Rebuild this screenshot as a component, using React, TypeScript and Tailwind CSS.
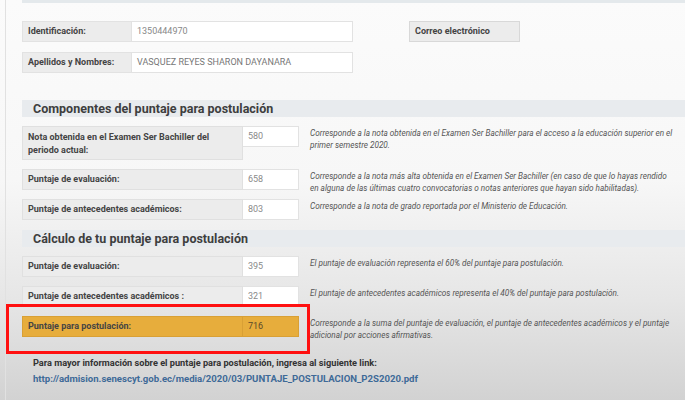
import React from 'react';

const font = { fontFamily: 'Roboto, "Liberation Sans", sans-serif' };

type Row = { label: string; value: string; desc: string; tall?: boolean; highlight?: boolean };

const componentes: Row[] = [
  {
    label: 'Nota obtenida en el Examen Ser Bachiller del periodo actual:',
    value: '580',
    desc: 'Corresponde a la nota obtenida en el Examen Ser Bachiller para el acceso a la educación superior en el primer semestre 2020.',
    tall: true,
  },
  {
    label: 'Puntaje de evaluación:',
    value: '658',
    desc: 'Corresponde a la nota más alta obtenida en el Examen Ser Bachiller (en caso de que lo hayas rendido en alguna de las últimas cuatro convocatorias o notas anteriores que hayan sido habilitadas).',
  },
  {
    label: 'Puntaje de antecedentes académicos:',
    value: '803',
    desc: 'Corresponde a la nota de grado reportada por el Ministerio de Educación.',
  },
];

const calculo: Row[] = [
  {
    label: 'Puntaje de evaluación:',
    value: '395',
    desc: 'El puntaje de evaluación representa el 60% del puntaje para postulación.',
  },
  {
    label: 'Puntaje de antecedentes académicos :',
    value: '321',
    desc: 'El puntaje de antecedentes académicos representa el 40% del puntaje para postulación.',
  },
  {
    label: 'Puntaje para postulación:',
    value: '716',
    desc: 'Corresponde a la suma del puntaje de evaluación, el puntaje de antecedentes académicos y el puntaje adicional por acciones afirmativas.',
    highlight: true,
  },
];

function ScoreRow({ row }: { row: Row }) {
  const labelBg = row.highlight ? 'bg-[#e7ad3c] border-[#d9a035]' : 'bg-[#ececec] border-[#e0e0e0]';
  const valueBg = row.highlight ? 'bg-[#e7ad3c] border-[#d9a035] text-[#5a4a2a]' : 'bg-white border-[#e2e2e2] text-[#8a8a8a]';
  return (
    <div className={`flex items-start ${row.tall ? 'h-[34px]' : 'h-[21px]'}`}>
      <div
        className={`w-[221px] shrink-0 border px-[5px] text-[9px] font-bold text-[#444] ${labelBg} ${
          row.tall ? 'h-[34px] pt-[4px] leading-[13px]' : 'h-[21px] leading-[19px]'
        }`}
      >
        {row.label}
      </div>
      <div className={`w-[56px] h-[21px] shrink-0 border border-l-0 px-[5px] text-[9px] leading-[19px] ${valueBg}`}>
        {row.value}
      </div>
      <p className="ml-[11px] pt-[1px] text-[8.2px] italic leading-[12px] text-[#555] pr-[9px]">{row.desc}</p>
    </div>
  );
}

function SectionTitle({ children }: { children: React.ReactNode }) {
  return (
    <div className="h-[17px] bg-[#e8ebee] pl-[11px] text-[12.5px] font-bold leading-[17px] text-[#3e3e3e]">
      {children}
    </div>
  );
}

export default function App() {
  return (
    <div
      className="relative w-[685px] h-[400px] overflow-hidden bg-[linear-gradient(to_bottom,#fbfbfb_0%,#f7f7f7_45%,#e6e6e6_75%,#d2d2d2_100%)]"
      style={font}
    >
      <div className="ml-[5px] h-full border-l border-[#e1e1e1] pl-[16px]">
        <div className="h-[3px] bg-[#e4e9ec]" />

        <div className="mt-[18px] flex items-start">
          <div className="flex flex-col gap-[10px]">
            <div className="flex">
              <div className="w-[110px] h-[21px] border border-[#e2e2e2] bg-[#ececec] px-[5px] text-[9px] font-bold leading-[19px] text-[#444]">
                Identificación:
              </div>
              <div className="w-[221px] h-[21px] border border-l-0 border-[#e2e2e2] bg-white px-[5px] text-[9px] leading-[19px] text-[#888]">
                1350444970
              </div>
            </div>
            <div className="flex">
              <div className="w-[110px] h-[21px] border border-[#e2e2e2] bg-[#ececec] px-[5px] text-[9px] font-bold leading-[19px] text-[#444]">
                Apellidos y Nombres:
              </div>
              <div className="w-[221px] h-[21px] border border-l-0 border-[#e2e2e2] bg-white px-[5px] text-[9px] leading-[19px] text-[#777]">
                VASQUEZ REYES SHARON DAYANARA
              </div>
            </div>
          </div>
          <div className="ml-[56px] w-[111px] h-[21px] border border-[#d8d8d8] bg-[#ececec] px-[5px] text-[9px] font-bold leading-[19px] text-[#444]">
            Correo electrónico
          </div>
        </div>

        <div className="mt-[27px]">
          <SectionTitle>Componentes del puntaje para postulación</SectionTitle>
        </div>
        <div className="mt-[9px] flex flex-col gap-[9px]">
          {componentes.map((r) => (
            <ScoreRow key={r.label} row={r} />
          ))}
        </div>

        <div className="mt-[10px]">
          <SectionTitle>Cálculo de tu puntaje para postulación</SectionTitle>
        </div>
        <div className="mt-[9px] flex flex-col gap-[9px]">
          {calculo.map((r) => (
            <ScoreRow key={r.label} row={r} />
          ))}
        </div>

        <div className="mt-[19px] pl-[11px]">
          <p className="text-[9.2px] font-bold leading-[13px] text-[#333]">
            Para mayor información sobre el puntaje para postulación, ingresa al siguiente link:
          </p>
          <p className="mt-[3px] text-[9.6px] font-bold leading-[13px] text-[#3e6a98]">
            http://admision.senescyt.gob.ec/media/2020/03/PUNTAJE_POSTULACION_P2S2020.pdf
          </p>
        </div>
      </div>

      {/* red annotation box */}
      <div className="absolute left-[6px] top-[304px] w-[304px] h-[50px] border-[3px] border-[#ff1010]" />
    </div>
  );
}
